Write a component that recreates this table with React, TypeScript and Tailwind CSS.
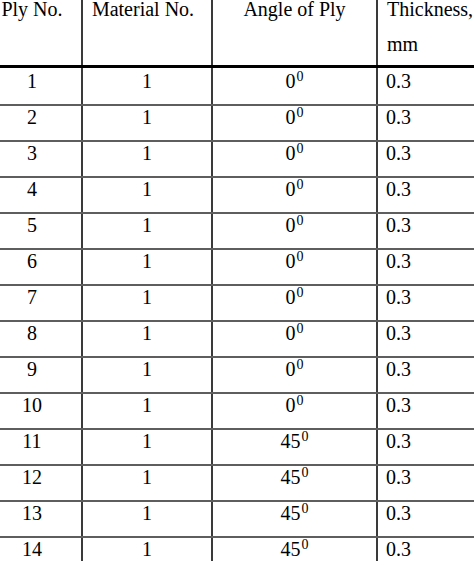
import React from "react";

const rows = Array.from({ length: 14 }, (_, i) => ({
  ply: String(i + 1),
  mat: "1",
  angle: i < 10 ? "0" : "45",
  thick: "0.3",
}));

export default function App() {
  return (
    <div
      className="w-[474px] h-[561px] overflow-hidden bg-white text-black"
      style={{ fontFamily: '"Liberation Serif", "Times New Roman", serif' }}
    >
      <div className="ml-[-17px] w-[620px] text-[20px]">
        {/* Header */}
        <div className="flex mt-[-8px] h-[76px] border-b-[3px] border-black">
          <div className="w-[100px] border-r-[2px] border-[#3a3a3a] text-center leading-[35px]">
            Ply No.
          </div>
          <div className="w-[130px] border-r-[2px] border-[#3a3a3a] text-center leading-[35px] pr-[8px]">
            Material No.
          </div>
          <div className="w-[165px] border-r-[2px] border-[#3a3a3a] text-center leading-[35px]">
            Angle of Ply
          </div>
          <div className="flex-1 pl-[9px] leading-[35px] whitespace-nowrap">
            Thickness,
            <br />
            mm
          </div>
        </div>
        {/* Rows */}
        {rows.map((r, i) => (
          <div
            key={i}
            className={`flex border-b-[2px] border-[#5e5e5e] ${
              i === 0 ? "h-[38px]" : "h-[36px]"
            }`}
          >
            <div
              className={`w-[100px] border-r-[2px] border-[#3a3a3a] text-center leading-[22px] ${
                i === 0 ? "pt-[2px]" : ""
              }`}
            >
              {r.ply}
            </div>
            <div
              className={`w-[130px] border-r-[2px] border-[#3a3a3a] text-center leading-[22px] ${
                i === 0 ? "pt-[2px]" : ""
              }`}
            >
              {r.mat}
            </div>
            <div
              className={`w-[165px] border-r-[2px] border-[#3a3a3a] text-center leading-[22px] ${
                i === 0 ? "pt-[2px]" : ""
              }`}
            >
              {r.angle}
              <sup className="text-[14px] ml-[1px]">0</sup>
            </div>
            <div
              className={`flex-1 pl-[8px] leading-[22px] ${
                i === 0 ? "pt-[2px]" : ""
              }`}
            >
              {r.thick}
            </div>
          </div>
        ))}
      </div>
    </div>
  );
}
